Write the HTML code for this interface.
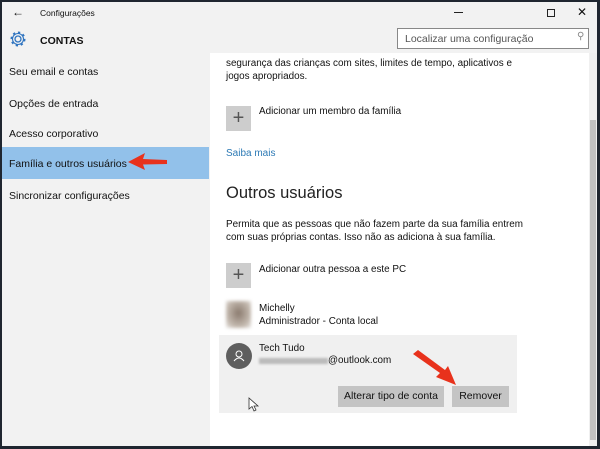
<!DOCTYPE html>
<html><head><meta charset="utf-8"><style>
*{margin:0;padding:0;box-sizing:border-box}
body{width:600px;height:449px;background:#1f2630;font-family:"Liberation Sans",sans-serif;color:#111;overflow:hidden;position:relative}
.win{position:absolute;left:2px;top:2px;width:595px;height:444px;background:#f2f2f2}
.t{position:absolute;white-space:nowrap}
.side{font-size:10.5px}
.content{position:absolute;left:208px;top:51px;width:381px;height:393px;background:#fff}
.c{font-size:9.9px;color:#111}
.plus{position:absolute;width:25px;height:25px;background:#cdcdcd;color:#555;font-size:20px;line-height:24px;text-align:center;font-weight:300}
.btn{position:absolute;height:21px;background:#c4c4c4;font-size:10.5px;text-align:center;line-height:21px}
</style></head><body>
<div class="win">
 <div class="t" style="left:10px;top:3px;font-size:12px">&#8592;</div>
 <div class="t" style="left:38px;top:6px;font-size:8.5px">Configurações</div>
 <div style="position:absolute;left:452px;top:10px;width:9px;height:1.3px;background:#222"></div>
 <div style="position:absolute;left:545px;top:7px;width:8px;height:8px;border:1.2px solid #222"></div>
 <div class="t" style="left:575px;top:3px;font-size:12px">&#10005;</div>
 <svg style="position:absolute;left:7px;top:28px" width="18" height="18" viewBox="0 0 18 18"><circle cx="9" cy="9" r="3" fill="none" stroke="#2f74c0" stroke-width="1.3"/><circle cx="9" cy="9" r="6.3" fill="none" stroke="#2f74c0" stroke-width="2.4" stroke-dasharray="2.2 2.7"/><circle cx="9" cy="9" r="5.5" fill="none" stroke="#2f74c0" stroke-width="1.1"/></svg>
 <div class="t" style="left:38px;top:33px;font-size:10.5px;font-weight:bold">CONTAS</div>
 <div style="position:absolute;left:395px;top:26px;width:192px;height:21px;background:#fff;border:1px solid #888"></div>
 <div class="t" style="left:403px;top:31px;font-size:10.5px;color:#555">Localizar uma configuração</div>
 <div class="t" style="left:575px;top:29px;font-size:10px;color:#888">&#9906;</div>

 <div class="t side" style="left:7px;top:64px">Seu email e contas</div>
 <div class="t side" style="left:7px;top:96px">Opções de entrada</div>
 <div class="t side" style="left:7px;top:126px">Acesso corporativo</div>
 <div style="position:absolute;left:0;top:145px;width:207px;height:32px;background:#92c1ea"></div>
 <div class="t side" style="left:7px;top:156px">Família e outros usuários</div>
 <svg style="position:absolute;left:124px;top:150px" width="44" height="20"><path d="M41 8 L17 7 L19 1 L2 10 L19 18 L17 12.5 L41 12 Z" fill="#e8321c"/></svg>
 <div class="t side" style="left:7px;top:188px">Sincronizar configurações</div>

 <div class="content">
  <div class="t c" style="left:16px;top:5px">segurança das crianças com sites, limites de tempo, aplicativos e</div>
  <div class="t c" style="left:16px;top:18px">jogos apropriados.</div>
  <div class="plus" style="left:16px;top:53px">+</div>
  <div class="t c" style="left:49px;top:53px">Adicionar um membro da família</div>
  <div class="t" style="left:16px;top:95px;font-size:10px;color:#2d7ab5">Saiba mais</div>
  <div class="t" style="left:16px;top:131px;font-size:16.5px;color:#222">Outros usuários</div>
  <div class="t c" style="left:16px;top:166px">Permita que as pessoas que não fazem parte da sua família entrem</div>
  <div class="t c" style="left:16px;top:179px">com suas próprias contas. Isso não as adiciona à sua família.</div>
  <div class="plus" style="left:16px;top:210px">+</div>
  <div class="t c" style="left:49px;top:211px">Adicionar outra pessoa a este PC</div>
  <div style="position:absolute;left:16px;top:248px;width:25px;height:27px;background:radial-gradient(ellipse at 50% 45%,#8a7a6e,#c8beb4 70%,#eee);filter:blur(1.5px)"></div>
  <div class="t c" style="left:49px;top:250px">Michelly</div>
  <div class="t c" style="left:49px;top:263px">Administrador - Conta local</div>
  <div style="position:absolute;left:9px;top:282px;width:298px;height:78px;background:#f0f0f0"></div>
  <div style="position:absolute;left:16px;top:290px;width:26px;height:26px;border-radius:50%;background:#5e5e5e"></div>
  <svg style="position:absolute;left:16px;top:290px" width="26" height="26"><circle cx="13" cy="11" r="3" fill="none" stroke="#fff" stroke-width="1"/><path d="M8 18 Q13 12 18 18" fill="none" stroke="#fff" stroke-width="1"/></svg>
  <div class="t c" style="left:49px;top:290px">Tech Tudo</div>
  <div style="position:absolute;left:49px;top:305px;width:69px;height:6px;background:#bbb;filter:blur(1px)"></div>
  <div class="t c" style="left:118px;top:302px">@outlook.com</div>
  <svg style="position:absolute;left:200px;top:296px" width="50" height="40"><path d="M3 5 L30 24 L26 28 L46 36 L38 17 L35 21 L8 1 Z" fill="#e8321c"/></svg>
  <div class="btn" style="left:128px;top:333px;width:106px">Alterar tipo de conta</div>
  <div class="btn" style="left:242px;top:333px;width:57px">Remover</div>
  <svg style="position:absolute;left:38px;top:344px" width="12" height="16"><path d="M1 1 L1 12 L4 9.5 L6 14 L8 13 L6 9 L10 9 Z" fill="#fff" stroke="#333" stroke-width="0.8"/></svg>
 </div>
 <div style="position:absolute;left:587px;top:51px;width:8px;height:393px;background:#f0f0f0"></div>
 <div style="position:absolute;left:588px;top:118px;width:6px;height:320px;background:#c2c2c2"></div>
</div>
</body></html>
